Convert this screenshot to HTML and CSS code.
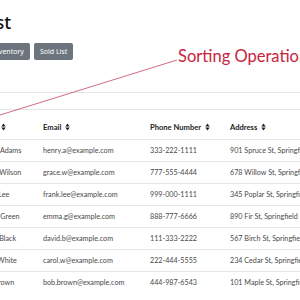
FILE: index.html
```html
<!DOCTYPE html>
<html lang="en">
<head>
  <meta charset="UTF-8">
  <title>Customer List</title>
  <link rel="stylesheet" href="styles.css">
</head>
<body>
  <div class="page">
    <h2 class="title">Customer List</h2>
    <div class="actions">
      <button class="btn">View Inventory</button>
      <button class="btn">Sold List</button>
    </div>
    <hr class="divider">

    <table class="customers">
      <colgroup>
        <col class="col-name">
        <col class="col-email">
        <col class="col-phone">
        <col class="col-address">
      </colgroup>
      <thead>
        <tr>
          <th>Name <svg class="sort" viewBox="0 0 5 8"><path d="M0.3 3.4 L2.5 0.4 L4.7 3.4 Z M0.3 4.6 L2.5 7.6 L4.7 4.6 Z"/></svg></th>
          <th>Email <svg class="sort" viewBox="0 0 5 8"><path d="M0.3 3.4 L2.5 0.4 L4.7 3.4 Z M0.3 4.6 L2.5 7.6 L4.7 4.6 Z"/></svg></th>
          <th>Phone Number <svg class="sort" viewBox="0 0 5 8"><path d="M0.3 3.4 L2.5 0.4 L4.7 3.4 Z M0.3 4.6 L2.5 7.6 L4.7 4.6 Z"/></svg></th>
          <th>Address <svg class="sort" viewBox="0 0 5 8"><path d="M0.3 3.4 L2.5 0.4 L4.7 3.4 Z M0.3 4.6 L2.5 7.6 L4.7 4.6 Z"/></svg></th>
        </tr>
      </thead>
      <tbody>
        <tr><td>Henry Adams</td><td>henry.a@example.com</td><td>333-222-1111</td><td>901 Spruce St, Springfield</td></tr>
        <tr><td>Grace Wilson</td><td>grace.w@example.com</td><td>777-555-4444</td><td>678 Willow St, Springfield</td></tr>
        <tr><td>Frank Lee</td><td>frank.lee@example.com</td><td>999-000-1111</td><td>345 Poplar St, Springfield</td></tr>
        <tr><td>Emma Green</td><td>emma.g@example.com</td><td>888-777-6666</td><td>890 Fir St, Springfield</td></tr>
        <tr><td>David Black</td><td>david.b@example.com</td><td>111-333-2222</td><td>567 Birch St, Springfield</td></tr>
        <tr><td>Carol White</td><td>carol.w@example.com</td><td>222-444-5555</td><td>234 Cedar St, Springfield</td></tr>
        <tr><td>Bob Brown</td><td>bob.brown@example.com</td><td>444-987-6543</td><td>101 Maple St, Springfield</td></tr>
      </tbody>
    </table>
  </div>

  <!-- annotation drawn over the screenshot -->
  <svg class="note-line" viewBox="0 0 300 300">
    <line x1="177" y1="60" x2="0" y2="115"/>
  </svg>
  <span class="note">Sorting Operation</span>
</body>
</html>
```

FILE: styles.css
```css
* {
  box-sizing: border-box;
}

body {
  margin: 0;
  width: 300px;
  height: 300px;
  overflow: hidden;
  position: relative;
  background: #fff;
  font-family: "Noto Sans", sans-serif;
  color: #212529;
}

.page {
  margin-left: -31px;
  width: 420px;
  padding-top: 10px;
}

.title {
  margin: 0 0 0 -77px;
  font-size: 18px;
  font-weight: 500;
  line-height: 24px;
  color: #111;
}

.actions {
  display: flex;
  gap: 4px;
  margin-top: 9px;
}

.btn {
  height: 17px;
  padding: 0 6px;
  border: none;
  border-radius: 2px;
  background: #6c757d;
  color: #fff;
  font-family: "Noto Sans", sans-serif;
  font-size: 7px;
  line-height: 17px;
}

.divider {
  margin: 32px 0 0;
  border: none;
  border-top: 1px solid #e3e6e9;
}

.customers {
  margin-top: 16px;
  width: 420px;
  table-layout: fixed;
  border-collapse: collapse;
  font-family: "Lato", sans-serif;
  font-size: 7.2px;
}

.col-name { width: 66px; }
.col-email { width: 107px; }
.col-phone { width: 80px; }
.col-address { width: 167px; }

.customers th,
.customers td {
  padding: 0 8px;
  text-align: left;
  white-space: nowrap;
  overflow: hidden;
}

.customers td:first-child {
  padding-left: 10px;
}

.customers thead tr {
  height: 30px;
  border-top: 1px solid #e3e6e9;
}

.customers th {
  vertical-align: bottom;
  padding-bottom: 7px;
  font-size: 7.6px;
  font-weight: 700;
  color: #222;
}

.customers tbody tr {
  height: 22px;
  border-top: 1px solid #e3e6e9;
}

.customers td {
  color: #4a4a4a;
}

.sort {
  width: 5px;
  height: 8px;
  margin-left: 2px;
  vertical-align: -1px;
  fill: #222;
}

.note-line {
  position: absolute;
  left: 0;
  top: 0;
  width: 300px;
  height: 300px;
  pointer-events: none;
}

.note-line line {
  stroke: #c4485c;
  stroke-width: 0.8;
}

.note {
  position: absolute;
  left: 178px;
  top: 46px;
  font-family: "Lato", sans-serif;
  font-size: 16.5px;
  color: #c8233d;
  white-space: nowrap;
}
```
